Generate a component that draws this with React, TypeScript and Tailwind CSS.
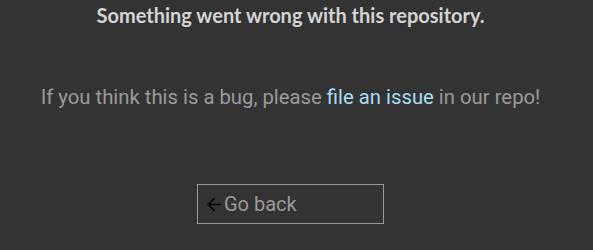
import React from "react";

export default function App() {
  return (
    <div className="w-[593px] h-[250px] bg-[#333333] overflow-hidden">
      <div className="w-[581px] flex flex-col items-center">
        <h1 className="mt-[2px] text-[20px] leading-[26px] font-bold text-[#d4d4d4]" style={{ fontFamily: "Lato, sans-serif" }}>
          Something went wrong with this repository.
        </h1>
        <p className="mt-[56px] text-[20.3px] leading-[26px] text-[#9a9a9a]" style={{ fontFamily: "Roboto, sans-serif" }}>
          If you think this is a bug, please <a className="text-[#a9dcf5]" href="#">file an issue</a> in our repo!
        </p>
        <button className="mt-[74px] w-[187px] h-[40px] border border-[#9a9a9a] flex items-center pl-[9px] text-[20px] text-[#9a9a9a]" style={{ fontFamily: "Roboto, sans-serif" }}>
          <svg width="14" height="15" viewBox="0 0 14 15" className="mr-[3px]">
            <path d="M13.5 7.5H1.5M7.5 1.2L1.2 7.5L7.5 13.8" stroke="#000" strokeWidth="1.6" fill="none" />
          </svg>
          Go back
        </button>
      </div>
    </div>
  );
}
